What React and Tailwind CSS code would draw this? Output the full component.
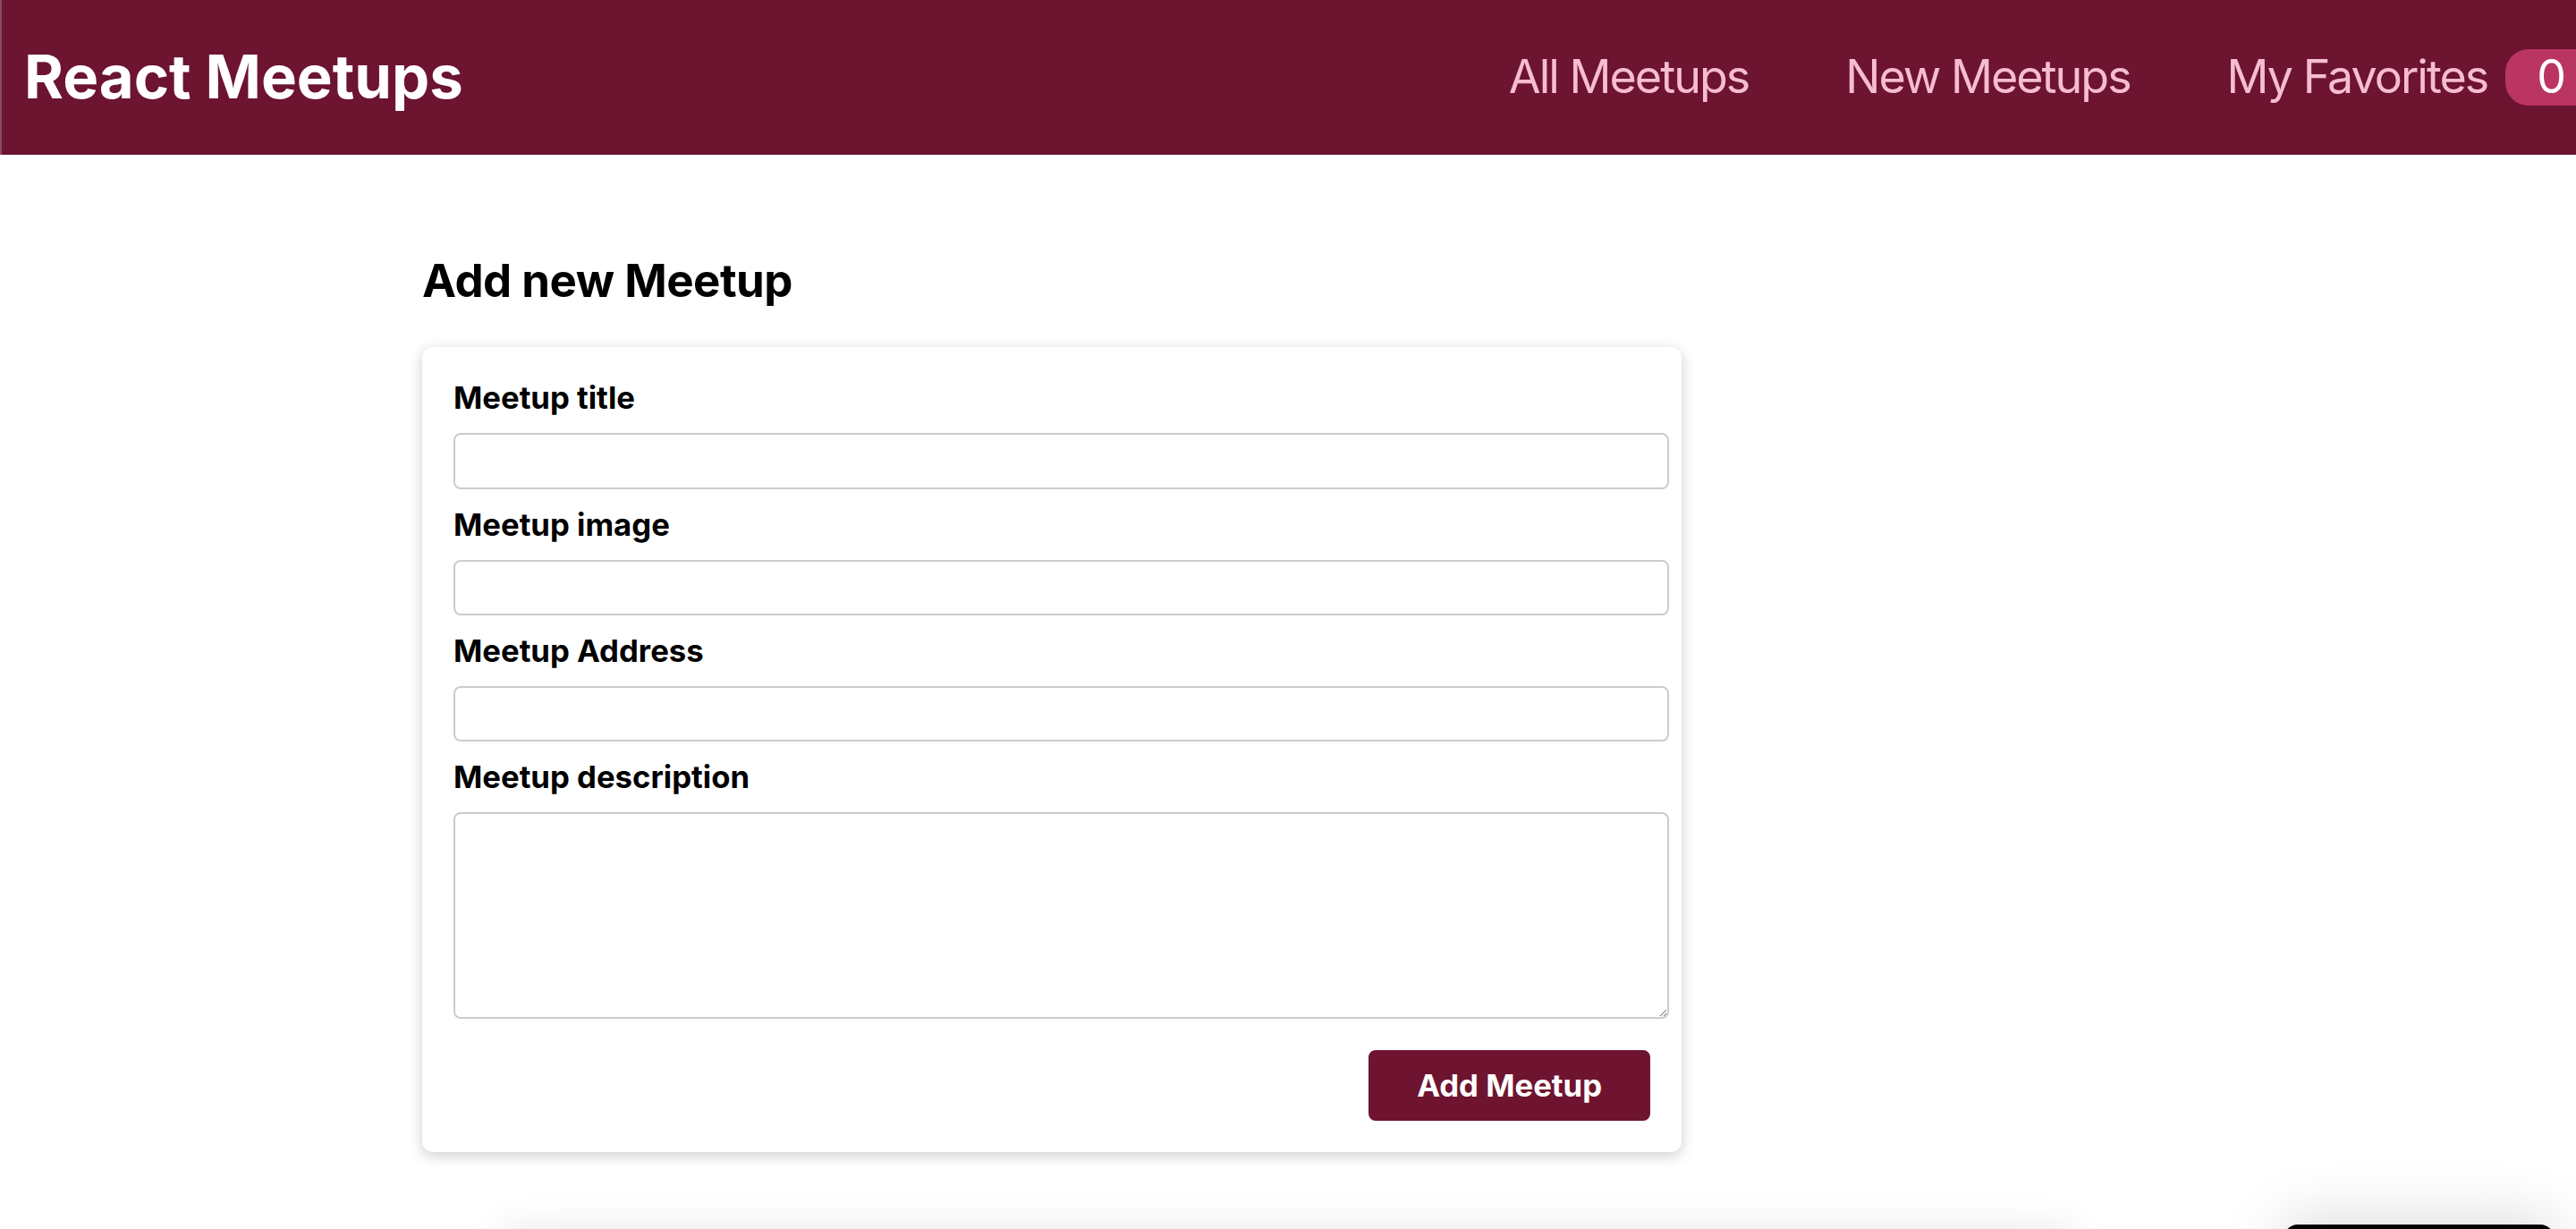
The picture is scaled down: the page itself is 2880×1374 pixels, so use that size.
import React from "react";

export default function App() {
  const fields = [
    { id: "title", label: "Meetup title", type: "text" },
    { id: "image", label: "Meetup image", type: "url" },
    { id: "address", label: "Meetup Address", type: "text" },
  ];

  return (
    <div className="relative w-[2880px] h-[1374px] overflow-hidden bg-white font-['Inter',_'Liberation_Sans',_sans-serif]">
      {/* Header */}
      <header className="flex items-center h-[173px] bg-[#6c1430] border-l-[2px] border-[#8c4a62] pl-[25px]">
        <div className="text-[67px] font-bold text-white leading-[1.2]">React Meetups</div>
        <nav className="ml-auto -mr-[24px]">
          <ul className="flex items-baseline gap-[108px] text-[52px] leading-[1.2] text-[#f6bcd2]">
            <li className="tracking-[-2px]">All Meetups</li>
            <li className="tracking-[-2px]">New Meetups</li>
            <li className="flex items-baseline">
              <span className="tracking-[-2px]">My Favorites</span>
              <span className="ml-[20px] px-[35px] rounded-[26px] bg-[#bb3562] text-white">0</span>
            </li>
          </ul>
        </nav>
      </header>

      {/* Main */}
      <main className="ml-[472px] w-[1408px] pt-[110px]">
        <h1 className="text-[51px] font-bold leading-[1.2] tracking-[-0.5px] text-black">Add new Meetup</h1>

        <div className="mt-[44px] bg-white rounded-[12px] shadow-[0_4px_16px_rgba(0,0,0,0.2)] p-[35px]">
          <form className="text-[34.7px] leading-[1.2]">
            {fields.map((f) => (
              <div key={f.id} className="mb-[18px]">
                <label htmlFor={f.id} className="block font-bold leading-[43px] mb-[18px] text-black">
                  {f.label}
                </label>
                <input
                  id={f.id}
                  type={f.type}
                  className="block box-content w-full h-[41px] p-[8.7px] border-2 border-[#ccc] rounded-[8px] outline-none"
                />
              </div>
            ))}
            <div className="mb-[18px]">
              <label htmlFor="description" className="block font-bold leading-[43px] mb-[18px] text-black">
                Meetup description
              </label>
              <textarea
                id="description"
                rows="5"
                className="block box-content w-full h-[209px] p-[8.7px] border-2 border-[#ccc] rounded-[8px] outline-none"
              ></textarea>
            </div>
            <div className="mt-[35px] text-right">
              <button
                type="button"
                className="font-bold text-white bg-[#6e1430] border-2 border-[#6e1430] rounded-[8px] px-[52px] py-[17px] leading-[1.2] cursor-pointer"
              >
                Add Meetup
              </button>
            </div>
          </form>
        </div>
      </main>

      {/* elements just below the fold */}
      <div className="absolute left-[560px] top-[1380px] w-[1760px] h-[200px] bg-white rounded-[16px] shadow-[0_0_50px_rgba(0,0,0,0.12)]"></div>
      <div className="absolute left-[2553px] top-[1369px] w-[303px] h-[60px] bg-black rounded-t-[16px] shadow-[0_0_70px_rgba(0,0,0,0.18)]"></div>
    </div>
  );
}
